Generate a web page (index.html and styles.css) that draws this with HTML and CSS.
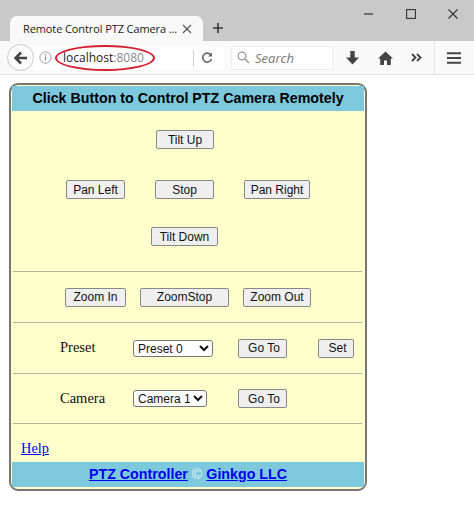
FILE: index.html
```html
<!DOCTYPE html>
<html lang="en">
<head>
<meta charset="utf-8">
<title>Remote Control PTZ Camera</title>
<link rel="stylesheet" href="styles.css">
</head>
<body>
<div class="tabbar">
  <div class="tab">
    <span class="tab-title">Remote Control PTZ Camera ...</span>
    <svg class="tab-close" width="10" height="10" viewBox="0 0 10 10"><path d="M1 1l8 8M9 1l-8 8" stroke="#555" stroke-width="1.1" fill="none"/></svg>
  </div>
  <svg class="new-tab" width="12" height="12" viewBox="0 0 12 12"><path d="M6 1v10M1 6h10" stroke="#333" stroke-width="1.6" fill="none"/></svg>
  <div class="win-controls">
    <svg width="10" height="10" viewBox="0 0 10 10"><path d="M0 5h9" stroke="#333" stroke-width="1.2"/></svg>
    <svg width="10" height="10" viewBox="0 0 10 10"><rect x=".6" y=".6" width="8.8" height="8.8" fill="none" stroke="#333" stroke-width="1.1"/></svg>
    <svg width="10" height="10" viewBox="0 0 10 10"><path d="M.5 .5l9 9M9.5 .5l-9 9" stroke="#333" stroke-width="1.1" fill="none"/></svg>
  </div>
</div>
<div class="toolbar">
  <div class="back">
    <svg width="14" height="14" viewBox="0 0 14 14"><path d="M7 1.5L1.5 7 7 12.5M2 7h11" stroke="#444" stroke-width="2.6" fill="none"/></svg>
  </div>
  <div class="urlbar">
    <svg class="info" width="13" height="13" viewBox="0 0 13 13"><circle cx="6.5" cy="6.5" r="5.6" fill="none" stroke="#999"/><path d="M6.5 5.5v4M6.5 3v1.4" stroke="#888" stroke-width="1.2"/></svg>
    <span class="url">localhost<span class="port">:8080</span></span>
    <span class="url-sep"></span>
    <svg class="reload" width="12" height="12" viewBox="0 0 12 12"><path d="M10 3.2A4.5 4.5 0 1 0 10.500 7" fill="none" stroke="#666" stroke-width="1.6"/><path d="M11 .6v4H7z" fill="#666"/></svg>
    <span class="oval"></span>
  </div>
  <div class="searchbar">
    <svg width="13" height="13" viewBox="0 0 13 13"><circle cx="5" cy="5" r="3.8" fill="none" stroke="#999" stroke-width="1.3"/><path d="M8 8l4 4" stroke="#999" stroke-width="1.6"/></svg>
    <span class="search-text">Search</span>
  </div>
  <svg class="tool dl" width="13" height="14" viewBox="0 0 13 14"><path d="M4.3 0h4.4v6.5H13L6.5 13.5 0 6.5h4.3z" fill="#444"/></svg>
  <svg class="tool home" width="15" height="14" viewBox="0 0 15 14"><path d="M7.5 .5L0 7.5h2.2V14h3.8V9.5h3V14h3.800V7.500H15z" fill="#444"/></svg>
  <svg class="tool more" width="11" height="9" viewBox="0 0 11 9"><path d="M1 1l3.500 3.500L1 8M6 1l3.500 3.500L6 8" fill="none" stroke="#444" stroke-width="1.900"/></svg>
  <span class="tool-sep"></span>
  <svg class="tool menu" width="14" height="12" viewBox="0 0 14 12"><path d="M0 1.200h14M0 6h14M0 10.800h14" stroke="#444" stroke-width="2"/></svg>
</div>
<main class="page">
  <div class="panel">
    <h1 class="bar title">Click Button to Control PTZ Camera Remotely</h1>
    <section class="section pad">
      <div class="row r-tilt-up"><button class="btn w-tiltup">Tilt Up</button></div>
      <div class="row r-pan">
        <button class="btn w-panleft">Pan Left</button>
        <button class="btn w-stop">Stop</button>
        <button class="btn w-panright">Pan Right</button>
      </div>
      <div class="row r-tilt-down"><button class="btn w-tiltdown">Tilt Down</button></div>
    </section>
    <hr class="rule">
    <section class="row line r-zoom">
      <button class="btn w-zoomin">Zoom In</button>
      <button class="btn w-zoomstop">ZoomStop</button>
      <button class="btn w-zoomout">Zoom Out</button>
    </section>
    <hr class="rule">
    <section class="row line r-form">
      <span class="label">Preset</span>
      <select class="sel s-preset"><option>Preset 0</option></select>
      <button class="btn w-goto">Go To</button>
      <button class="btn w-set">Set</button>
    </section>
    <hr class="rule">
    <section class="row line short r-form">
      <span class="label">Camera</span>
      <select class="sel s-camera"><option>Camera 1</option></select>
      <button class="btn w-goto">Go To</button>
    </section>
    <hr class="rule">
    <div class="help"><a href="#">Help</a></div>
    <footer class="bar foot"><a href="#">PTZ Controller</a> <span class="copy">©</span> <a href="#">Ginkgo LLC</a></footer>
  </div>
</main>
</body>
</html>
```
FILE: styles.css
```css
* { box-sizing: border-box; }
html, body { margin: 0; padding: 0; background: #fff; }
body { width: 474px; height: 524px; overflow: hidden; font-family: "Liberation Sans", Arial, sans-serif; }

.tabbar { height: 41px; background: #c9c9c9; display: flex; align-items: flex-end; padding-left: 10px; }
.tab { width: 193px; height: 25px; background: #f9f9f9; border-radius: 7px 7px 0 0; display: flex; align-items: center; padding-left: 13px; }
.tab-title { font: 11px "Open Sans", sans-serif; color: #222; width: 160px; white-space: nowrap; letter-spacing: -.1px; }
.tab-close { margin-left: -1px; }
.new-tab { margin: 0 0 7px 9px; }
.win-controls { margin-left: auto; align-self: flex-start; display: flex; gap: 32px; padding: 9px 16px 0 0; }

.toolbar { height: 34px; background: #f9f9f9; border-bottom: 1px solid #e2e2e2; display: flex; align-items: center; padding-left: 7px; position: relative; }
.back { width: 27px; height: 27px; border-radius: 50%; border: 1px solid #c8c8c8; background: #fbfbfb; display: flex; align-items: center; justify-content: center; z-index: 1; }
.urlbar { width: 191px; height: 24px; margin-left: -1px; background: #fff; display: flex; align-items: center; padding-left: 6px; position: relative; }
.info { flex: none; }
.url { font: 12px "Open Sans", sans-serif; color: #222; margin-left: 11px; width: 130px; }
.port { color: #888; }
.url-sep { width: 1px; height: 16px; background: #ccc; }
.reload { margin-left: 7px; }
.oval { position: absolute; left: 22px; top: -1px; width: 100px; height: 26px; border: 2px solid #d31f30; border-radius: 50%; }
.searchbar { width: 102px; height: 24px; margin-left: 7px; background: #fff; border: 1px solid #eee; display: flex; align-items: center; padding-left: 5px; gap: 5px; }
.search-text { font: italic 13px "Open Sans", sans-serif; color: #777; }
.tool { flex: none; }
.dl { margin-left: 13px; }
.home { margin-left: 19px; }
.more { margin-left: 18px; }
.tool-sep { width: 1px; height: 33px; background: #e6e6e6; margin-left: 12px; }
.menu { margin-left: 12px; }

.page { padding: 8px 0 0 9px; }
.panel { width: 358px; height: 408px; border: 2px solid #777; border-radius: 9px; background: #ffffcc; padding: 1px; display: flex; flex-direction: column; }
.bar { background: #7cc8dc; margin: 0; text-align: center; font-size: 14.25px; font-weight: bold; }
.title { height: 25px; line-height: 25px; color: #000; }
.section.pad { height: 160px; padding-top: 19px; }
.row { display: flex; align-items: center; }
.line { height: 50px; }
.line.short { height: 49px; }
.short .label { margin-top: 0; }
.rule { margin: 0 2px 0 0.5px; border: 0; border-top: 1px solid #b5b0a0; height: 1px; flex: none; }

.btn { height: 19px; padding: 0; font: 12px "Liberation Sans", Arial, sans-serif; color: #111; background: #efefef; border: 1px solid #888; border-radius: 2px; }
.r-tilt-up { padding-left: 144px; }
.r-pan { padding-left: 54px; margin-top: 31px; }
.r-tilt-down { padding-left: 139px; margin-top: 28px; }
.w-tiltup { width: 58px; }
.w-panleft { width: 59px; }
.w-stop { width: 59px; margin-left: 30px; }
.w-panright { width: 66px; margin-left: 30px; }
.w-tiltdown { width: 67px; }
.r-zoom { padding-left: 53px; }
.w-zoomin { width: 61px; }
.w-zoomstop { width: 89px; margin-left: 14px; }
.w-zoomout { width: 68px; margin-left: 14px; }
.label { font: 14.5px "Liberation Serif", "Times New Roman", serif; color: #111; margin: -2px 0 0 48px; }
.sel { height: 17px; padding: 0; font: 12px "Liberation Sans", Arial, sans-serif; color: #111; background: #fff; border: 1px solid #777; border-radius: 3px; position: absolute; }
.r-form { position: relative; }
.s-preset { left: 121px; width: 80px; }
.s-camera { left: 121px; width: 74px; }
.w-goto { width: 49px; position: absolute; left: 226px; padding-left: 3px; }
.w-set { width: 36px; position: absolute; left: 306px; padding-left: 3px; }
.help { flex: 1; padding: 16px 0 0 9px; font: 14.4px "Liberation Serif", "Times New Roman", serif; }
.help a, .foot a { color: #0000ee; }
.foot { height: 25px; line-height: 24px; margin-bottom: 1px; }
.copy { color: #e8f4f8; font-weight: normal; }
```
